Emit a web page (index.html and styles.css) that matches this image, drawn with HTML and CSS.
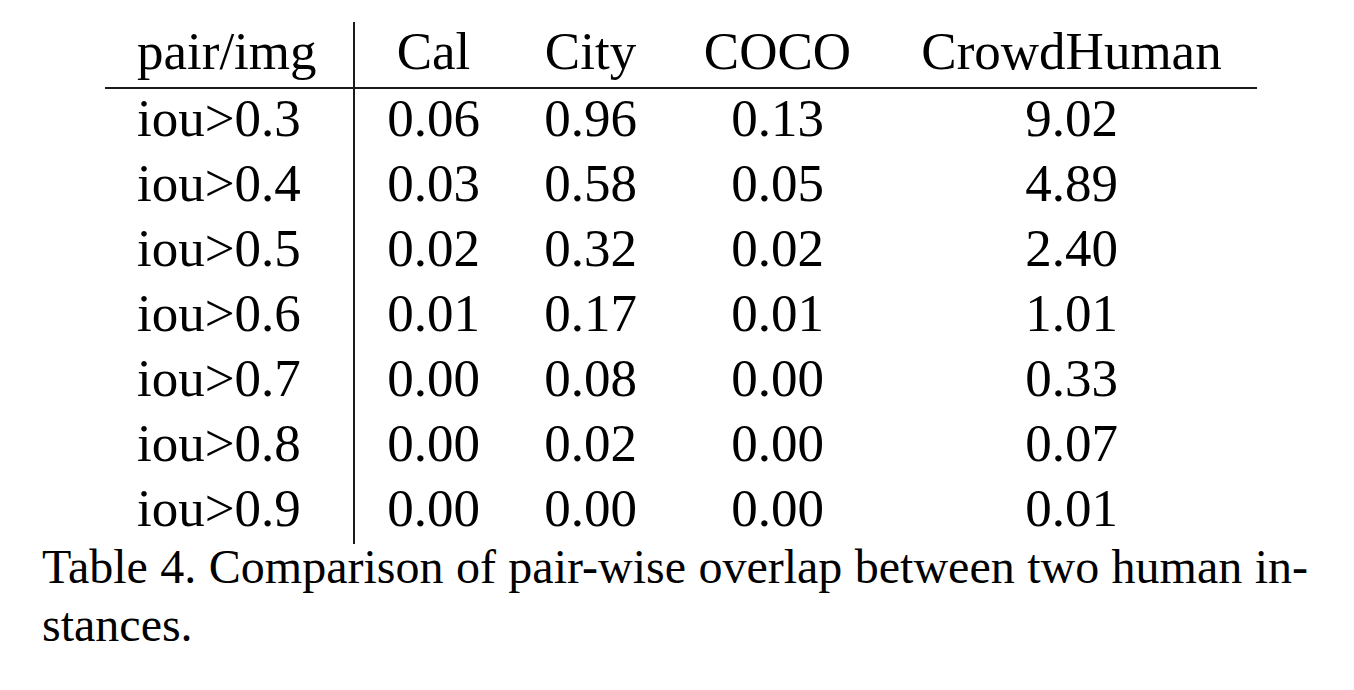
FILE: index.html
```html
<!DOCTYPE html>
<html lang="en">
<head>
<meta charset="utf-8">
<title>Table 4</title>
<link rel="stylesheet" href="styles.css">
</head>
<body>
<div class="figure">
  <div class="table">
    <div class="vrule"></div>
    <div class="hrule"></div>

    <div class="cell label">pair/img</div>
    <div class="cell">Cal</div>
    <div class="cell">City</div>
    <div class="cell">COCO</div>
    <div class="cell">CrowdHuman</div>

    <div class="cell label">iou&gt;0.3</div>
    <div class="cell">0.06</div>
    <div class="cell">0.96</div>
    <div class="cell">0.13</div>
    <div class="cell">9.02</div>

    <div class="cell label">iou&gt;0.4</div>
    <div class="cell">0.03</div>
    <div class="cell">0.58</div>
    <div class="cell">0.05</div>
    <div class="cell">4.89</div>

    <div class="cell label">iou&gt;0.5</div>
    <div class="cell">0.02</div>
    <div class="cell">0.32</div>
    <div class="cell">0.02</div>
    <div class="cell">2.40</div>

    <div class="cell label">iou&gt;0.6</div>
    <div class="cell">0.01</div>
    <div class="cell">0.17</div>
    <div class="cell">0.01</div>
    <div class="cell">1.01</div>

    <div class="cell label">iou&gt;0.7</div>
    <div class="cell">0.00</div>
    <div class="cell">0.08</div>
    <div class="cell">0.00</div>
    <div class="cell">0.33</div>

    <div class="cell label">iou&gt;0.8</div>
    <div class="cell">0.00</div>
    <div class="cell">0.02</div>
    <div class="cell">0.00</div>
    <div class="cell">0.07</div>

    <div class="cell label">iou&gt;0.9</div>
    <div class="cell">0.00</div>
    <div class="cell">0.00</div>
    <div class="cell">0.00</div>
    <div class="cell">0.01</div>
  </div>
  <div class="caption">
    <div class="caption-line full">Table 4. Comparison of pair-wise overlap between two human in-</div>
    <div class="caption-line">stances.</div>
  </div>
</div>
</body>
</html>
```

FILE: styles.css
```css
body {
  margin: 0;
  padding: 0;
  background: #ffffff;
  color: #000000;
  font-family: "Liberation Serif", "Times New Roman", serif;
}

.figure {
  width: 1354px;
  padding-top: 22px;
}

.table {
  display: grid;
  margin-left: 105px;
  width: 1152px;
  grid-template-columns: 248px 2px 157px 157px 217px 371px;
  grid-template-rows: 65px 2px repeat(7, 65px);
  font-size: 53px;
}

.vrule {
  grid-column: 2;
  grid-row: 1 / -1;
  background: #1a1a1a;
}

.hrule {
  grid-column: 1 / -1;
  grid-row: 2;
  background: #1a1a1a;
}

.cell {
  line-height: 58px;
  padding-bottom: 7px;
  text-align: center;
  white-space: nowrap;
}

.label {
  text-align: left;
  padding-left: 32px;
}

.caption {
  margin-top: -6px;
  margin-left: 42px;
  width: 1266px;
  font-size: 48px;
  line-height: 58px;
}

.full {
  text-align: justify;
  text-align-last: justify;
}
```
